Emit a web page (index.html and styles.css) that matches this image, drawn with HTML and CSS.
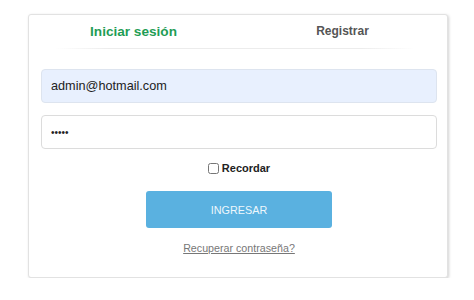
FILE: index.html
```html
<!DOCTYPE html>
<html lang="es">
<head>
<meta charset="utf-8">
<link rel="stylesheet" href="styles.css">
</head>
<body>
<div class="card">
  <div class="tabs">
    <div class="tab active">Iniciar sesión</div>
    <div class="tab">Registrar</div>
  </div>
  <div class="divider"></div>
  <form class="form">
    <input class="field email" type="text" value="admin@hotmail.com">
    <input class="field pass" type="password" value="12345">
    <label class="remember"><input type="checkbox" class="check"> Recordar</label>
    <button type="button" class="btn">INGRESAR</button>
    <a class="link" href="#">Recuperar contraseña?</a>
  </form>
</div>
</body>
</html>
```
FILE: styles.css
```css
* { box-sizing: border-box; }
html, body { margin: 0; padding: 0; background: #fff; }
body {
  font-family: "Liberation Sans", Arial, sans-serif;
  padding: 14px 0 0 28px;
}
.card {
  width: 420px;
  height: 264px;
  border: 1px solid #e2e2e2;
  border-radius: 3px;
  box-shadow: 1px 1px 3px rgba(0,0,0,0.18);
  background: #fff;
}
.tabs {
  display: flex;
  height: 33px;
}
.tab {
  flex: 1;
  text-align: center;
  font-weight: bold;
  font-size: 12px;
  color: #555;
  padding-top: 9px;
}
.tab.active {
  color: #1f9d55;
  font-size: 13.6px;
  padding-top: 9px;
}
.divider {
  height: 1px;
  margin: 0 32px 0 26px;
  background: linear-gradient(to right, rgba(235,235,235,0), #ececec 15%, #ececec 85%, rgba(235,235,235,0));
}
.form {
  display: flex;
  flex-direction: column;
  align-items: center;
  padding: 20px 10px 0 12px;
}
.field {
  width: 100%;
  height: 34px;
  border: 1px solid #dcdcdc;
  border-radius: 4px;
  font-family: "Liberation Sans", Arial, sans-serif;
  font-size: 13px;
  color: #222;
  padding: 0 9px;
  outline: none;
}
.email {
  background: #e8f0fe;
  border-color: #dde4ef;
  font-size: 12.7px;
}
.pass {
  margin-top: 12px;
  background: #fff;
  font-size: 10px;
}
.remember {
  margin-top: 13px;
  display: flex;
  align-items: center;
  font-size: 11px;
  font-weight: bold;
  color: #222;
}
.check {
  width: 11px;
  height: 11px;
  margin: 0 3px 0 0;
}
.btn {
  margin-top: 17px;
  width: 186px;
  height: 37px;
  border: none;
  border-radius: 3px;
  background: #5ab1e0;
  color: #eef7fc;
  font-family: "Liberation Sans", Arial, sans-serif;
  font-size: 10.8px;
  cursor: pointer;
}
.link {
  margin-top: 14px;
  font-size: 10.7px;
  color: #777;
  text-decoration: underline;
}
```
